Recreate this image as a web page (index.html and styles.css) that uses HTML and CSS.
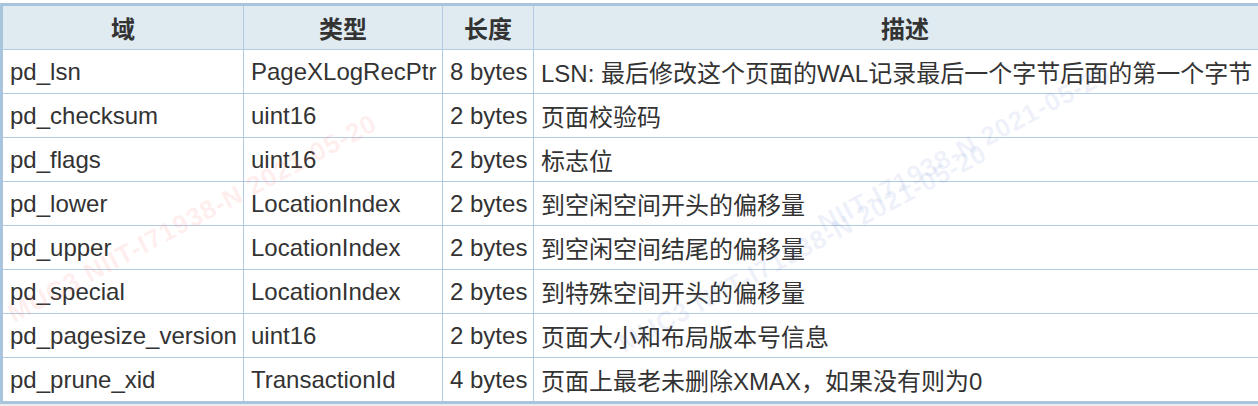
FILE: index.html
```html
<!DOCTYPE html>
<html lang="zh-CN">
<head>
  <meta charset="utf-8">
  <title>PageHeaderData</title>
  <link rel="stylesheet" href="styles.css">
</head>
<body>
  <div class="pagina">
    <table class="campos">
      <thead>
        <tr>
          <th class="col-campo">域</th>
          <th class="col-tipo">类型</th>
          <th class="col-largo">长度</th>
          <th class="col-desc">描述</th>
        </tr>
      </thead>
      <tbody>
        <tr>
          <td>pd_lsn</td>
          <td>PageXLogRecPtr</td>
          <td>8 bytes</td>
          <td>LSN: 最后修改这个页面的WAL记录最后一个字节后面的第一个字节</td>
        </tr>
        <tr>
          <td>pd_checksum</td>
          <td>uint16</td>
          <td>2 bytes</td>
          <td>页面校验码</td>
        </tr>
        <tr>
          <td>pd_flags</td>
          <td>uint16</td>
          <td>2 bytes</td>
          <td>标志位</td>
        </tr>
        <tr>
          <td>pd_lower</td>
          <td>LocationIndex</td>
          <td>2 bytes</td>
          <td>到空闲空间开头的偏移量</td>
        </tr>
        <tr>
          <td>pd_upper</td>
          <td>LocationIndex</td>
          <td>2 bytes</td>
          <td>到空闲空间结尾的偏移量</td>
        </tr>
        <tr>
          <td>pd_special</td>
          <td>LocationIndex</td>
          <td>2 bytes</td>
          <td>到特殊空间开头的偏移量</td>
        </tr>
        <tr>
          <td>pd_pagesize_version</td>
          <td>uint16</td>
          <td>2 bytes</td>
          <td>页面大小和布局版本号信息</td>
        </tr>
        <tr>
          <td>pd_prune_xid</td>
          <td>TransactionId</td>
          <td>4 bytes</td>
          <td>页面上最老未删除XMAX，如果没有则为0</td>
        </tr>
      </tbody>
    </table>

    <!-- marca de agua -->
    <span class="marca rosa m2">MUC3 NIIT-I71938-N 2021-05-20</span>
    <span class="marca azul m4">MUC3 NIIT-I71938-N 2021-05-20</span>
    <span class="marca azul m5">NIIT-I71938-N 2021-05-20</span>
  </div>
</body>
</html>
```

FILE: styles.css
```css
html, body {
  margin: 0;
  background-color: #ececec;
}

body {
  font-family: "Liberation Sans", Arial, "Noto Sans CJK SC", sans-serif;
  color: #333;
}

.pagina {
  position: relative;
  width: 1258px;
  height: 404px;
  padding-top: 3px;
  box-sizing: border-box;
  background-color: #fff;
  overflow: hidden;
}

.campos {
  table-layout: fixed;
  width: 1274px;
  border-collapse: separate;
  border-spacing: 0;
  border: 3px solid #a9c4dd;
  border-right: none;
  background-color: #fff;
  font-size: 24px;
}

.campos th,
.campos td {
  box-sizing: border-box;
  border-right: 1px solid #b3cbe0;
  border-bottom: 1px solid #b3cbe0;
  padding: 0 7px;
  white-space: nowrap;
  overflow: hidden;
}

.campos th {
  height: 44px;
  background-color: #dfeaf1;
  font-family: "Noto Sans CJK SC", sans-serif;
  font-weight: bold;
  font-size: 24px;
  text-align: center;
  color: #333;
}

.campos td {
  height: 44px;
  text-align: left;
}

.campos tbody tr:last-child td {
  border-bottom: none;
  height: 43px;
}

.col-campo { width: 241px; }
.col-tipo  { width: 199px; }
.col-largo { width: 91px; }
.col-desc  { width: 743px; }

.marca {
  position: absolute;
  font-family: "Liberation Sans", Arial, sans-serif;
  font-size: 26px;
  font-weight: bold;
  white-space: nowrap;
  transform: rotate(-28deg);
  transform-origin: left center;
  pointer-events: none;
  letter-spacing: 1px;
}

.rosa { color: rgba(255, 120, 120, 0.13); }
.azul { color: rgba(120, 150, 210, 0.12); }

.m2 { left: 10px; top: 300px; }
.m4 { left: 620px; top: 330px; }
.m5 { left: 820px; top: 210px; }
```
